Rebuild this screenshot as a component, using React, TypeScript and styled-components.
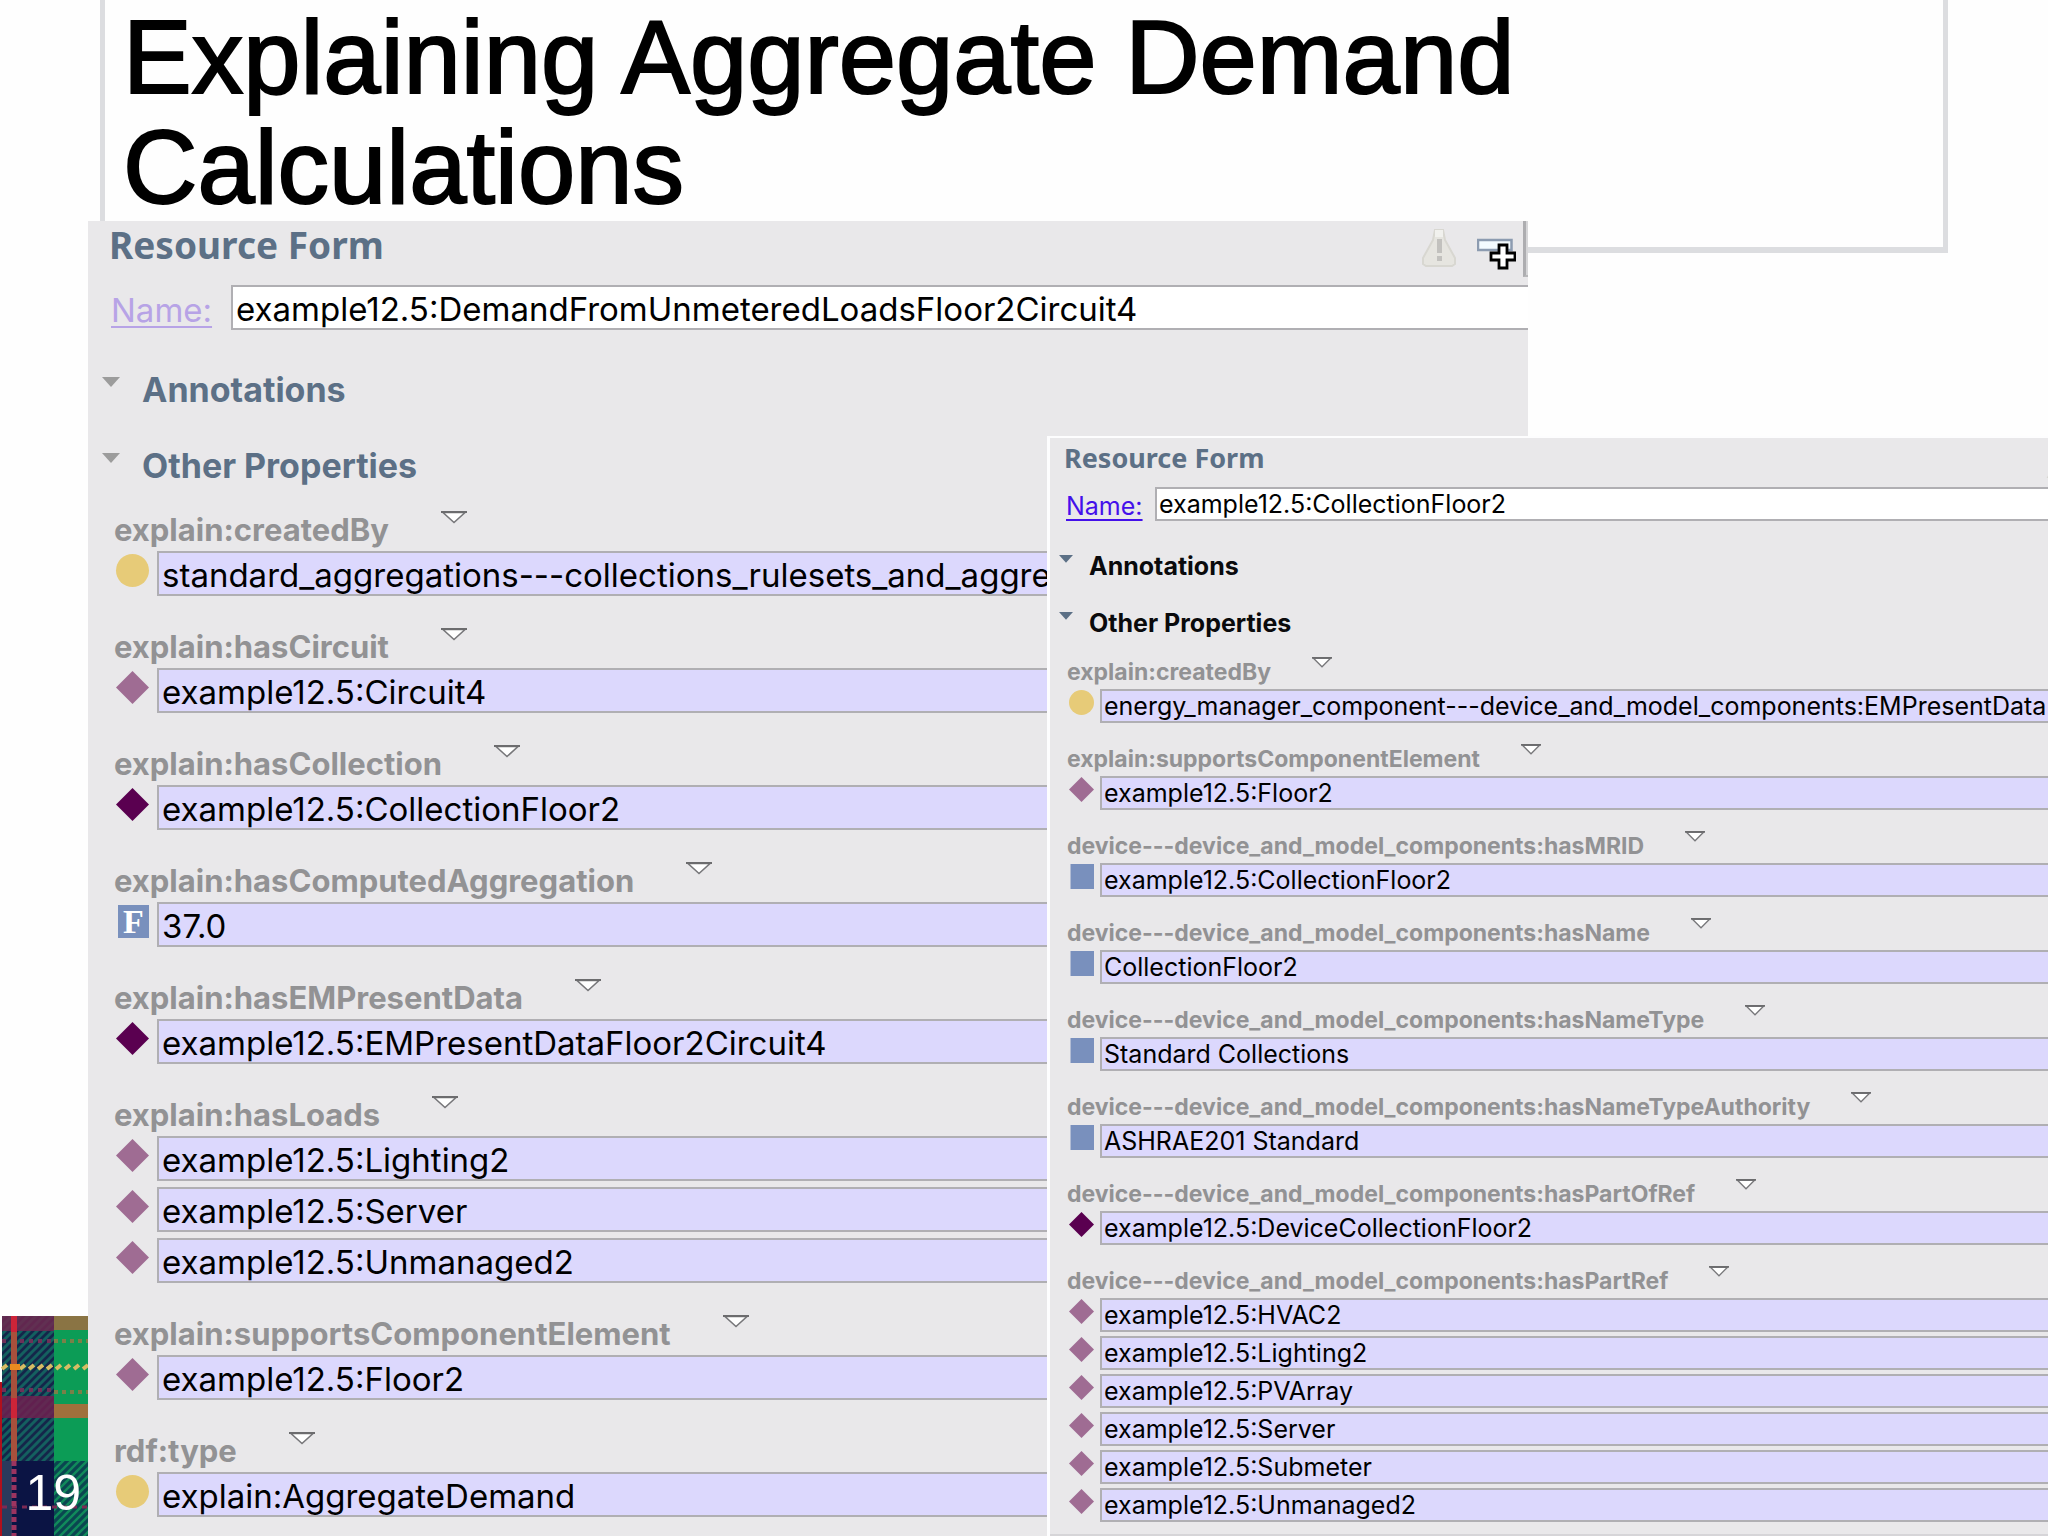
import React, { useId } from "react";
import styled, { createGlobalStyle, css, ThemeProvider } from "styled-components";

const GlobalStyle = createGlobalStyle`
  * { box-sizing: border-box; }
  body { margin: 0; background: #ffffff; font-family: Inter, "Liberation Sans", sans-serif; }
`;

/* Two densities of the same form: the large capture and the smaller one over it. */
const large = {
  headerHeight: 56,
  titleSize: 37,
  titleLine: 48,
  titleIndent: 21,
  nameGap: 8,
  nameIndent: 23,
  nameWidth: 120,
  nameSize: 33,
  fieldHeight: 45,
  fieldSize: 33,
  fieldPad: 2,
  textIndent: 3,
  labelSize: 31,
  labelLine: 42,
  labelIndent: 26,
  headHeight: 45,
  menuGap: 52,
  menuTop: 5,
  menuWidth: 26,
  menuHeight: 13,
  groupGap: 27,
  rowGap: 6,
  iconColumn: 69,
  iconIndent: 28,
  iconSize: 33,
  iconTop: 3,
  sectionTop: 42,
  sectionGap: 40,
  sectionHeight: 36,
  sectionSize: 34,
  sectionIndent: 14,
  sectionText: 22,
  twistyWidth: 18,
  twistyTop: 5,
  listTop: 22,
  sectionColor: "#5c7086",
  twistyColor: "#9c9c9c",
  nameColor: "#b7a3e6",
};

const small: typeof large = {
  headerHeight: 42,
  titleSize: 27,
  titleLine: 40,
  titleIndent: 14,
  nameGap: 7,
  nameIndent: 16,
  nameWidth: 89,
  nameSize: 25,
  fieldHeight: 34,
  fieldSize: 25,
  fieldPad: 0,
  textIndent: 2,
  labelSize: 23,
  labelLine: 34,
  labelIndent: 17,
  headHeight: 33,
  menuGap: 41,
  menuTop: 1,
  menuWidth: 20,
  menuHeight: 11,
  groupGap: 20,
  rowGap: 4,
  iconColumn: 50,
  iconIndent: 19,
  iconSize: 25,
  iconTop: 1,
  sectionTop: 31,
  sectionGap: 29,
  sectionHeight: 28,
  sectionSize: 25,
  sectionIndent: 9,
  sectionText: 16,
  twistyWidth: 14,
  twistyTop: 3,
  listTop: 19,
  sectionColor: "#0a0a0c",
  twistyColor: "#5c7086",
  nameColor: "#4410ea",
};

type Density = typeof large;
const px = (key: keyof Density) => (p: { theme: any }) => `${p.theme[key]}px`;

const Slide = styled.main`
  position: relative;
  display: flex;
  flex-direction: column;
  min-height: 100vh;
  overflow: hidden;
  background: #fefefe;
`;

const TitleFrame = styled.header`
  margin: 0 100px;
  padding: 3px 18px 24px;
  border: solid #dcdde0;
  border-width: 0 5px 6px;
`;

const SlideTitle = styled.h1`
  margin: 0;
  font: 400 103px/110px "Liberation Sans", Arial, sans-serif;
  color: #000000;
  -webkit-text-stroke: 2px #000000;
`;

const Body = styled.div`
  display: flex;
  flex: 1;
  margin-top: -32px;
  padding-right: 520px;
`;

const Side = styled.aside`
  display: flex;
  flex: 0 0 88px;
  flex-direction: column;
  justify-content: flex-end;
`;

const Tartan = styled.div`
  position: relative;
  height: 220px;
  svg { display: block; width: 100%; height: 100%; }
`;

const PageNumber = styled.span`
  position: absolute;
  right: 7px;
  bottom: 13px;
  font: 400 50px/60px "Liberation Sans", Arial, sans-serif;
  color: #ffffff;
`;

const panelBase = css`
  display: flex;
  flex-direction: column;
  background: #e9e8ea;
`;

const BackPanel = styled.section`
  ${panelBase}
  flex: 1;
  min-width: 0;
`;

const FrontPanel = styled.section`
  ${panelBase}
  position: absolute;
  top: 436px;
  right: 0;
  bottom: 0;
  left: 1047px;
  border: solid #fdfdfe;
  border-width: 2px 0 0 3px;
  box-shadow: inset 0 -2px 0 #d6d5d8;
`;

const FormHeader = styled.div`
  display: flex;
  align-items: flex-start;
  height: ${px("headerHeight")};
  padding-left: ${px("titleIndent")};
`;

const FormTitle = styled.h2`
  flex: 1;
  margin: 0;
  font: 700 ${px("titleSize")}/${px("titleLine")} "Noto Sans", "Open Sans", sans-serif;
  color: #5c7086;
`;

const ToolButton = styled.button<{ $end?: number }>`
  display: block;
  margin: 7px ${(p) => p.$end ?? 0}px 0 0;
  padding: 0;
  border: 0;
  background: none;
  svg { display: block; }
`;

const EdgeBar = styled.span`
  width: 5px;
  height: 56px;
  border-left: 3px solid #adadb0;
  border-bottom: 2px solid #b8b8ba;
  background: #d6d6d8;
`;

const ClippedTool = styled.div`
  width: 5px;
  height: 40px;
  padding-top: 8px;
  overflow: hidden;
`;

const NameRow = styled.div`
  display: flex;
  align-items: center;
  margin-top: ${px("nameGap")};
  padding-left: ${px("nameIndent")};
`;

const NameLabel = styled.label`
  flex: 0 0 ${px("nameWidth")};
  padding-top: 5px;
  font-size: ${px("nameSize")};
  line-height: 1;
  a {
    color: ${(p) => p.theme.nameColor};
    text-decoration-thickness: 2px;
    text-underline-offset: 4px;
  }
`;

const Field = styled.input<{ $plain?: boolean }>`
  flex: 1;
  min-width: 0;
  height: ${px("fieldHeight")};
  padding: ${px("fieldPad")} 0 0 ${px("textIndent")};
  border: 2px solid #b0afb3;
  border-right: 0;
  border-radius: 0;
  outline: 0;
  background: ${(p) => (p.$plain ? "#ffffff" : "#dcd8fd")};
  font: 400 ${px("fieldSize")} Inter, "Liberation Sans", sans-serif;
  color: #000000;
`;

const Sections = styled.div`
  display: flex;
  flex-direction: column;
  gap: ${px("sectionGap")};
  margin-top: ${px("sectionTop")};
`;

const SectionRow = styled.div`
  display: flex;
  align-items: flex-start;
  gap: ${px("sectionText")};
  height: ${px("sectionHeight")};
  padding-left: ${px("sectionIndent")};
`;

const Twisty = styled.button`
  width: ${px("twistyWidth")};
  margin: ${px("twistyTop")} 0 0;
  padding: 0;
  border: 0;
  background: none;
  color: ${(p) => p.theme.twistyColor};
  svg { display: block; width: 100%; }
`;

const SectionTitle = styled.h3`
  margin: 0;
  font-size: ${px("sectionSize")};
  font-weight: 700;
  line-height: ${px("sectionHeight")};
  color: ${(p) => p.theme.sectionColor};
`;

const PropertyList = styled.div`
  display: flex;
  flex-direction: column;
  gap: ${px("groupGap")};
  margin-top: ${px("listTop")};
`;

const Group = styled.div`
  display: flex;
  flex-direction: column;
  gap: ${px("rowGap")};
`;

const GroupHead = styled.div`
  display: flex;
  align-items: flex-end;
  gap: ${px("menuGap")};
  height: ${px("headHeight")};
  margin-bottom: -${px("rowGap")};
  padding-left: ${px("labelIndent")};
`;

const PropertyLabel = styled.label`
  font-size: ${px("labelSize")};
  font-weight: 700;
  line-height: ${px("labelLine")};
  white-space: nowrap;
  color: #929294;
`;

const MenuButton = styled.button`
  align-self: flex-start;
  width: ${px("menuWidth")};
  height: ${px("menuHeight")};
  margin: ${px("menuTop")} 0 0;
  padding: 0;
  border: 0;
  background: none;
  svg { display: block; width: 100%; height: 100%; }
`;

const ValueRow = styled.div`
  display: flex;
`;

const IconCell = styled.span`
  flex: 0 0 ${px("iconColumn")};
  padding: ${px("iconTop")} 0 0 ${px("iconIndent")};
  svg { display: block; width: ${px("iconSize")}; height: ${px("iconSize")}; overflow: visible; }
`;

type Kind = "circle" | "diamond" | "dark" | "square" | "float";

function KindIcon({ kind }: { kind: Kind }) {
  return (
    <svg viewBox="0 0 33 33" aria-hidden="true">
      {kind === "circle" && <circle cx="16.5" cy="16.5" r="16.5" fill="#e7cb78" />}
      {kind === "diamond" && <path d="M16.5 0L33 16.5L16.5 33L0 16.5Z" fill="#9f6c93" />}
      {kind === "dark" && <path d="M16.5 0L33 16.5L16.5 33L0 16.5Z" fill="#5a0050" />}
      {(kind === "square" || kind === "float") && <rect x="2" width="31" height="33" fill="#7990bd" />}
      {kind === "float" && (
        <text x="17.5" y="28" textAnchor="middle" fontFamily="Liberation Serif" fontWeight="700" fontSize="34" fill="#ffffff">
          F
        </text>
      )}
    </svg>
  );
}

function WarningIcon() {
  return (
    <svg width="36" height="40" viewBox="0 0 36 40" aria-hidden="true">
      <path d="M14 2H22L24 12L34 30V36L31 38H5L2 36V30L12 12Z" fill="#e6e5e0" stroke="#d8d7d1" strokeWidth="2" />
      <path d="M14 2H22V9H14Z" fill="#f1f1ee" />
      <path d="M16 11H21V25H16ZM16 28H21V33H16Z" fill="#c2c1be" />
    </svg>
  );
}

function AddWidgetIcon() {
  return (
    <svg width="39" height="42" viewBox="0 0 39 42" aria-hidden="true">
      <rect x="1" y="12" width="33.5" height="10" fill="#f4fbff" stroke="#8c9bb0" strokeWidth="2.5" />
      <path
        d="M22 17H30V25H38V32H30V40H22V32H14V25H22Z"
        fill="#ffffff"
        stroke="#000000"
        strokeWidth="2.8"
      />
    </svg>
  );
}

function TartanPattern() {
  return (
    <svg viewBox="0 0 88 220" preserveAspectRatio="none" aria-hidden="true">
      <defs>
        <pattern id="twill" width="8" height="8" patternUnits="userSpaceOnUse">
          <path d="M-1 9L9 -1M-5 5L5 -5M3 13L13 3" stroke="#14264a" strokeWidth="2.8" />
        </pattern>
        <pattern id="twillGreen" width="8" height="8" patternUnits="userSpaceOnUse">
          <path d="M-1 9L9 -1M-5 5L5 -5M3 13L13 3" stroke="#108a5a" strokeWidth="2.4" />
        </pattern>
      </defs>
      <rect y="66" width="2" height="154" fill="#b0101c" />
      <rect x="2" width="86" height="220" fill="#14605f" />
      <rect x="2" width="52" height="145" fill="url(#twill)" />
      <rect x="54" width="34" height="145" fill="#0c9c56" />
      <rect x="2" width="52" height="15" fill="#6e2850" opacity="0.85" />
      <rect x="54" width="34" height="14" fill="#8a7444" />
      <path d="M2 25H54M2 74H54" stroke="#6e3058" strokeWidth="4" strokeDasharray="4 5" />
      <path d="M54 25H88M54 76H88" stroke="#7a8048" strokeWidth="4" strokeDasharray="4 4" />
      <rect x="2" y="80" width="52" height="22" fill="#6e2050" opacity="0.85" />
      <rect x="54" y="88" width="34" height="14" fill="#a0703c" />
      <rect x="2" y="145" width="52" height="75" fill="#0b1444" />
      <rect x="54" y="145" width="34" height="75" fill="#0a4650" />
      <rect x="54" y="145" width="34" height="75" fill="url(#twillGreen)" />
      <rect x="2" y="145" width="10" height="75" fill="#2a3a5c" />
      <path d="M2 53L7 49M11 53L16 49M20 53L25 49M29 53L34 49M38 53L43 49M47 53L52 49M56 53L61 49M65 53L70 49M74 53L79 49M83 53L88 49" stroke="#d8bc64" strokeWidth="4" />
      <path d="M2 191H88" stroke="#7c2a54" strokeWidth="3" strokeDasharray="5 5" />
      <rect x="11" width="6" height="145" fill="#a8503c" />
      <rect x="11" width="6" height="16" fill="#cc2438" />
      <rect x="11" y="82" width="6" height="20" fill="#cc2438" />
      <path d="M14 145V220" stroke="#9c3460" strokeWidth="5" strokeDasharray="5 3" />
      <path d="M10 51H20" stroke="#e88a20" strokeWidth="6" />
    </svg>
  );
}

function PropertyGroup({ name, values }: { name: string; values: [Kind, string][] }) {
  const id = useId();
  return (
    <Group>
      <GroupHead>
        <PropertyLabel id={`${id}-label`} htmlFor={`${id}-0`}>{name}</PropertyLabel>
        <MenuButton type="button" aria-label={`${name} menu`}>
          <svg viewBox="0 0 26 13" preserveAspectRatio="none" aria-hidden="true">
            <path d="M2 1.5H24L13 11.5Z" fill="#ffffff" stroke="#77777a" strokeWidth="1.6" />
            <path d="M0 1H26" stroke="#6c6c6e" strokeWidth="2" />
          </svg>
        </MenuButton>
      </GroupHead>
      {values.map(([kind, value], i) => (
        <ValueRow key={value}>
          <IconCell><KindIcon kind={kind} /></IconCell>
          <Field id={`${id}-${i}`} aria-labelledby={`${id}-label`} defaultValue={value} />
        </ValueRow>
      ))}
    </Group>
  );
}

function Section({ title }: { title: string }) {
  return (
    <SectionRow>
      <Twisty type="button" aria-label={`Toggle ${title}`}>
        <svg viewBox="0 0 18 10" aria-hidden="true">
          <path d="M0 0H18L9 10Z" fill="currentColor" />
        </svg>
      </Twisty>
      <SectionTitle>{title}</SectionTitle>
    </SectionRow>
  );
}

type Property = { name: string; values: [Kind, string][] };

function ResourceForm({ resource, properties, tools }: { resource: string; properties: Property[]; tools: React.ReactNode }) {
  const id = useId();
  return (
    <>
      <FormHeader>
        <FormTitle>Resource Form</FormTitle>
        {tools}
      </FormHeader>
      <NameRow>
        <NameLabel htmlFor={id}><a href="#name">Name:</a></NameLabel>
        <Field id={id} $plain defaultValue={resource} />
      </NameRow>
      <Sections>
        <Section title="Annotations" />
        <Section title="Other Properties" />
      </Sections>
      <PropertyList>
        {properties.map((p) => <PropertyGroup key={p.name} {...p} />)}
      </PropertyList>
    </>
  );
}

const demand: Property[] = [
  { name: "explain:createdBy", values: [["circle", "standard_aggregations---collections_rulesets_and_aggregations"]] },
  { name: "explain:hasCircuit", values: [["diamond", "example12.5:Circuit4"]] },
  { name: "explain:hasCollection", values: [["dark", "example12.5:CollectionFloor2"]] },
  { name: "explain:hasComputedAggregation", values: [["float", "37.0"]] },
  { name: "explain:hasEMPresentData", values: [["dark", "example12.5:EMPresentDataFloor2Circuit4"]] },
  {
    name: "explain:hasLoads",
    values: [
      ["diamond", "example12.5:Lighting2"],
      ["diamond", "example12.5:Server"],
      ["diamond", "example12.5:Unmanaged2"],
    ],
  },
  { name: "explain:supportsComponentElement", values: [["diamond", "example12.5:Floor2"]] },
  { name: "rdf:type", values: [["circle", "explain:AggregateDemand"]] },
];

const device = "device---device_and_model_components:";

const collection: Property[] = [
  { name: "explain:createdBy", values: [["circle", "energy_manager_component---device_and_model_components:EMPresentData"]] },
  { name: "explain:supportsComponentElement", values: [["diamond", "example12.5:Floor2"]] },
  { name: `${device}hasMRID`, values: [["square", "example12.5:CollectionFloor2"]] },
  { name: `${device}hasName`, values: [["square", "CollectionFloor2"]] },
  { name: `${device}hasNameType`, values: [["square", "Standard Collections"]] },
  { name: `${device}hasNameTypeAuthority`, values: [["square", "ASHRAE201 Standard"]] },
  { name: `${device}hasPartOfRef`, values: [["dark", "example12.5:DeviceCollectionFloor2"]] },
  {
    name: `${device}hasPartRef`,
    values: [
      ["diamond", "example12.5:HVAC2"],
      ["diamond", "example12.5:Lighting2"],
      ["diamond", "example12.5:PVArray"],
      ["diamond", "example12.5:Server"],
      ["diamond", "example12.5:Submeter"],
      ["diamond", "example12.5:Unmanaged2"],
    ],
  },
];

export default function App() {
  return (
    <Slide>
      <GlobalStyle />
      <TitleFrame>
        <SlideTitle>Explaining Aggregate Demand Calculations</SlideTitle>
      </TitleFrame>
      <Body>
        <Side>
          <Tartan>
            <TartanPattern />
            <PageNumber>19</PageNumber>
          </Tartan>
        </Side>
        <ThemeProvider theme={large}>
          <BackPanel>
            <ResourceForm
              resource="example12.5:DemandFromUnmeteredLoadsFloor2Circuit4"
              properties={demand}
              tools={
                <>
                  <ToolButton type="button" aria-label="Warnings" $end={20}><WarningIcon /></ToolButton>
                  <ToolButton type="button" aria-label="Add widget" $end={7}><AddWidgetIcon /></ToolButton>
                  <EdgeBar />
                </>
              }
            />
          </BackPanel>
        </ThemeProvider>
      </Body>
      <ThemeProvider theme={small}>
        <FrontPanel>
          <ResourceForm
            resource="example12.5:CollectionFloor2"
            properties={collection}
            tools={
              <ClippedTool>
                <ToolButton type="button" aria-label="Warnings"><WarningIcon /></ToolButton>
              </ClippedTool>
            }
          />
        </FrontPanel>
      </ThemeProvider>
    </Slide>
  );
}
